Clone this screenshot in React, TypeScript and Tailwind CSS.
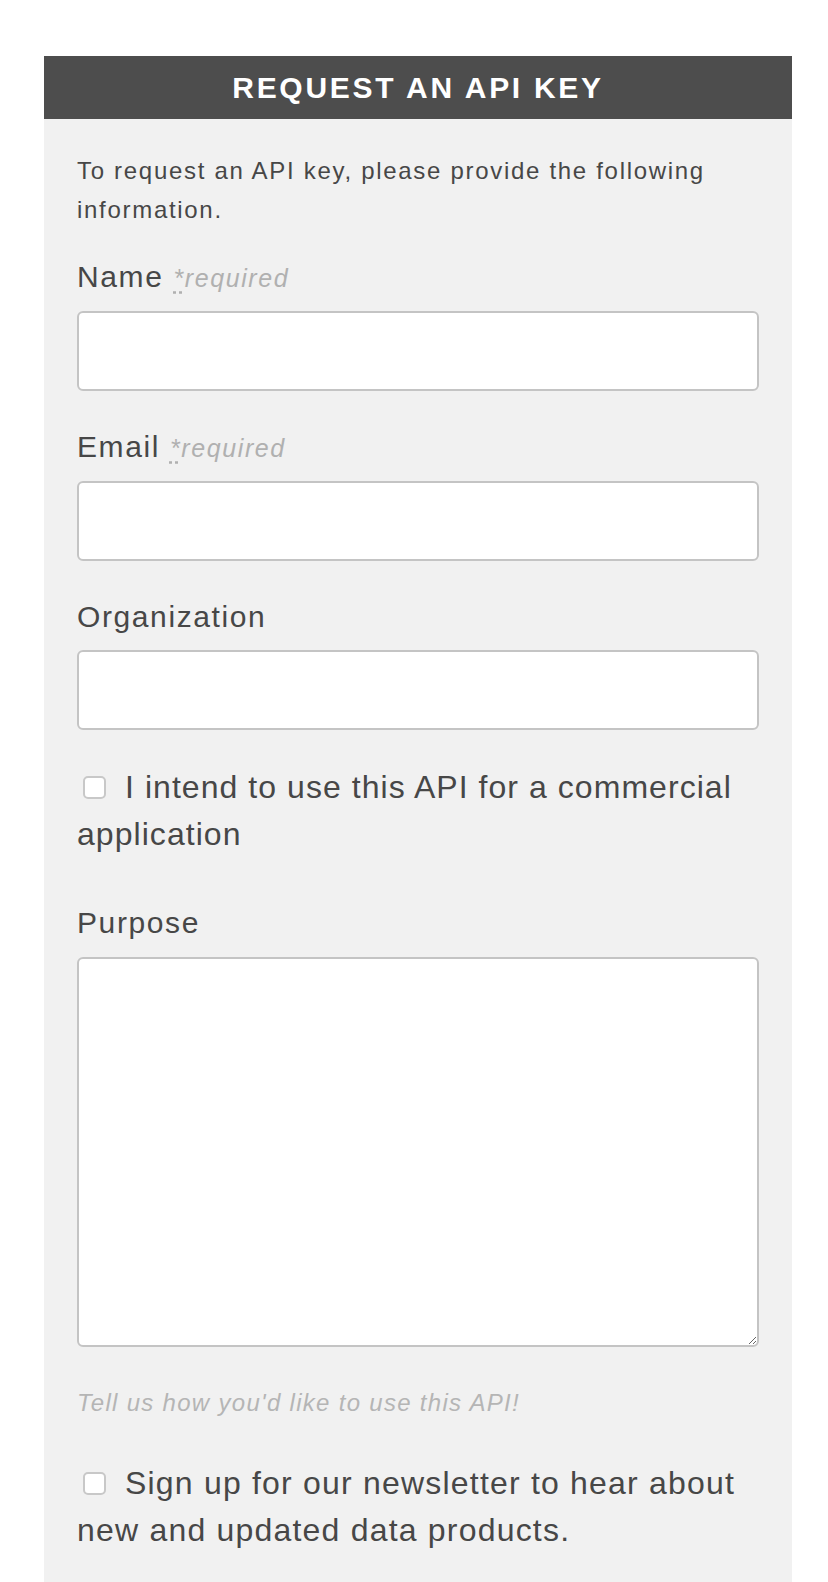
import React from 'react';

const font = { fontFamily: '"Liberation Sans", Arial, sans-serif' };

const Field = ({ label, required }: { label: string; required?: boolean }) => (
  <div>
    <label className="block text-[30px] leading-[40px] tracking-[1.6px] text-[#474747]">
      {label}{' '}
      {required && (
        <span className="text-[25px] italic tracking-[1.6px] text-[#b0b0b0]">
          <abbr className="underline decoration-dotted underline-offset-4" title="required">*</abbr>required
        </span>
      )}
    </label>
    <input
      type="text"
      className="mt-[13px] block h-[80px] w-full rounded-[6px] border-2 border-[#c4c4c4] bg-white px-3 outline-none"
    />
  </div>
);

const Check = ({ children, className }: { children: React.ReactNode; className?: string }) => (
  <label className={`block text-[32px] leading-[47px] text-[#474747] ${className ?? 'tracking-[1.05px]'}`}>
    <input
      type="checkbox"
      className="ml-[6px] mr-[19px] inline-block h-[23px] w-[23px] appearance-none rounded-[5px] border-2 border-[#c8c8c8] bg-white align-[-1px]"
    />
    {children}
  </label>
);

export default function App() {
  return (
    <div className="h-screen overflow-hidden bg-white pt-[56px]" style={font}>
      <div className="ml-[44px] mr-[36px] bg-[#f1f1f1]">
        <div className="flex h-[63px] items-center justify-center bg-[#4d4d4d]">
          <h1 className="text-[30px] font-bold tracking-[2.7px] text-white">REQUEST AN API KEY</h1>
        </div>
        <div className="px-[33px] pt-[32px] pb-[80px]">
          <p className="text-[24px] leading-[39px] tracking-[1.7px] text-[#474747]">
            To request an API key, please provide the following information.
          </p>
          <div className="mt-[28px] flex flex-col gap-[36px]">
            <Field label="Name" required />
            <Field label="Email" required />
            <Field label="Organization" />
          </div>
          <div className="mt-[34px]">
            <Check>I intend to use this API for a commercial application</Check>
          </div>
          <div className="mt-[45px]">
            <label className="block text-[30px] leading-[40px] tracking-[1.6px] text-[#474747]">Purpose</label>
            <textarea className="mt-[14px] block h-[390px] w-full resize-y rounded-[6px] border-2 border-[#c4c4c4] bg-white outline-none" />
          </div>
          <p className="mt-[39px] text-[24px] italic leading-[34px] tracking-[1.3px] text-[#b5b5b5]">
            Tell us how you'd like to use this API!
          </p>
          <div className="mt-[40px]">
            <Check className="tracking-[1.2px]">
              Sign up for our newsletter to hear about new and updated data products.
            </Check>
          </div>
        </div>
      </div>
    </div>
  );
}
